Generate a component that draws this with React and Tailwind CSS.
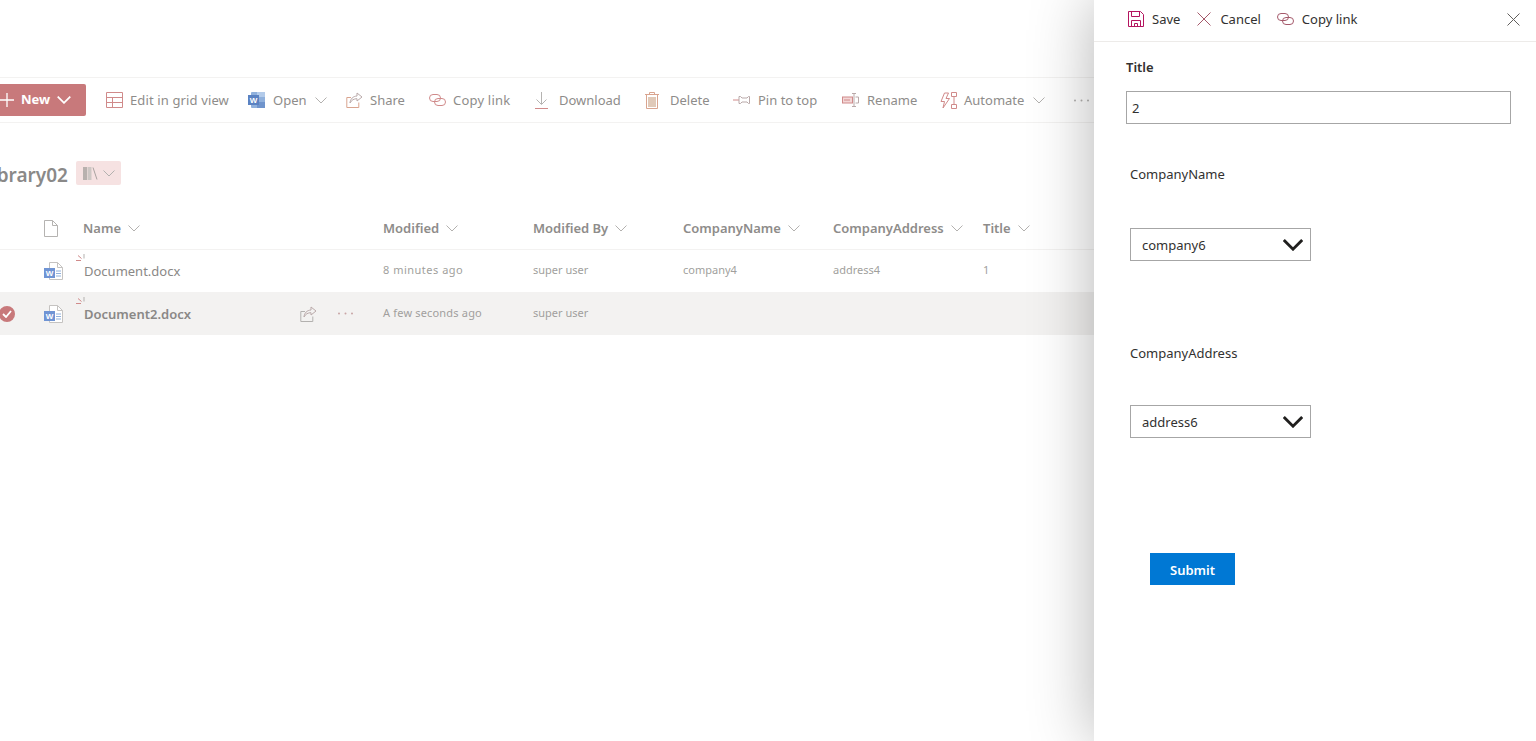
import React from 'react';

// Small line icons drawn to match the command bar
const GridIcon = () => (
  <svg width="17" height="16" viewBox="0 0 17 16" fill="none" stroke="#d08a8a" strokeWidth="1">
    <path d="M.5.5h16v15H.5zM.5 5.500h16M.5 10.500h16M6.500 5.500v10" />
  </svg>
);

const WordIcon = () => (
  <svg width="17" height="16" viewBox="0 0 17 16">
    <rect x="3" y="0" width="14" height="16" rx="1" fill="#8fb0dc" />
    <rect x="9" y="0" width="8" height="5" fill="#b3cbea" />
    <rect x="9" y="10" width="8" height="6" fill="#6f94cc" />
    <rect x="0" y="3" width="11" height="10" fill="#5a82c2" />
    <text x="5.500" y="11" textAnchor="middle" fontSize="8" fontWeight="700" fill="#fff" fontFamily="Liberation Sans, sans-serif">W</text>
  </svg>
);

const ShareIcon = ({ color = '#d9a48f' }) => (
  <svg width="17" height="16" viewBox="0 0 17 16" fill="none" strokeWidth="1">
    <path d="M5 5.500H.8v10h12v-5" stroke={color} />
    <path d="M11 1l5 4-5 4V6.700C8 6.700 5.500 8 4 11c.3-4 3-6.800 7-7z" stroke="#b9a9a9" />
  </svg>
);

const LinkIcon = ({ color = '#d08a8a' }) => (
  <svg width="17" height="12" viewBox="0 0 17 12" fill="none" stroke={color} strokeWidth="1">
    <rect x=".5" y=".5" width="11" height="7" rx="3.500" />
    <rect x="5.500" y="4.500" width="11" height="7" rx="3.500" />
  </svg>
);

const DownloadIcon = () => (
  <svg width="15" height="17" viewBox="0 0 15 17" fill="none" strokeWidth="1">
    <path d="M7.500 0v12M2.500 7.500l5 5 5-5" stroke="#b5b3b1" />
    <path d="M1 16.500h13" stroke="#d08a8a" />
  </svg>
);

const TrashIcon = () => (
  <svg width="14" height="17" viewBox="0 0 14 17" fill="none" strokeWidth="1">
    <rect x="3" y="5" width="8" height="10" fill="#e0c9b8" stroke="none" />
    <path d="M1.500 3v13.500h11V3M0 2.500h14M4.500 2.500V.5h5v2" stroke="#d9a48f" />
  </svg>
);

const PinIcon = () => (
  <svg width="18" height="10" viewBox="0 0 18 10" fill="none" stroke="#b9a9a9" strokeWidth="1">
    <path d="M0 5h6" stroke="#d08a8a" />
    <path d="M6 1.500h1.500L9 3h5l1.500-1.500h1v7h-1L14 7H9L7.500 8.500H6z" />
  </svg>
);

const RenameIcon = () => (
  <svg width="17" height="14" viewBox="0 0 17 14" fill="none" strokeWidth="1">
    <rect x=".5" y="4" width="10" height="6" fill="#f3d7d7" stroke="#d08a8a" />
    <path d="M2 7h6" stroke="#d08a8a" />
    <path d="M10 .5h4M10 13.500h4M12 .5v13M13.500 4h3v6h-3" stroke="#b9a9a9" />
  </svg>
);

const AutomateIcon = () => (
  <svg width="17" height="17" viewBox="0 0 17 17" fill="none" stroke="#d08a8a" strokeWidth="1">
    <path d="M4.500 1h4L6 6.500h3.500L3 16l1.500-6.500H1z" />
    <path d="M11.500.5h5v4h-5zM11.500 12.500h5v4h-5zM14 4.500v8" />
  </svg>
);

const Chevron = ({ className = '', color = '#b3b1af', w = 12, h = 7, sw = 1 }) => (
  <svg className={className} width={w} height={h} viewBox="0 0 12 7" fill="none" stroke={color} strokeWidth={sw}>
    <path d="M.5.5 6 6 11.500.5" />
  </svg>
);

const Dots = ({ color = '#b3b1af' }) => (
  <svg width="17" height="3" viewBox="0 0 17 3" fill={color}>
    <circle cx="2" cy="1.500" r="1" />
    <circle cx="8.500" cy="1.500" r="1" />
    <circle cx="15" cy="1.500" r="1" />
  </svg>
);

const DocIcon = () => (
  <svg width="19" height="18" viewBox="0 0 19 18">
    <path d="M5.500.5h8l5 5v12h-13z" fill="#fff" stroke="#c5c3c1" />
    <path d="M13.500.5v5h5" fill="none" stroke="#c5c3c1" />
    <path d="M12 9h5M12 11.500h5M12 14h5" stroke="#8fb0dc" />
    <rect x="0" y="6" width="11" height="10" fill="#6f94d4" />
    <text x="5.500" y="14" textAnchor="middle" fontSize="8" fontWeight="700" fill="#fff" fontFamily="Liberation Sans, sans-serif">W</text>
  </svg>
);

const NewMark = () => (
  <svg className="absolute left-[-8px] top-[-6px]" width="10" height="10" viewBox="0 0 10 10" fill="none" strokeWidth="1">
    <path d="M0 6.500h5M2 1.500l3.500 3" stroke="#d08a8a" />
    <path d="M8 0v4.500" stroke="#b3b1af" />
  </svg>
);

const commands = [
  { icon: <GridIcon />, label: 'Edit in grid view', box: 'w-[99px] tracking-[0.13px]', slot: 'w-[24px]', next: 'mr-[19px]' },
  { icon: <WordIcon />, label: 'Open', box: 'w-[34px]', slot: 'w-[25px]', next: 'mr-[19px]', chevron: true },
  { icon: <ShareIcon />, label: 'Share', box: 'w-[35px]', slot: 'w-[24px]', next: 'mr-[24px]' },
  { icon: <LinkIcon />, label: 'Copy link', box: 'w-[58px] tracking-[0.2px]', slot: 'w-[24px]', next: 'mr-[23px]' },
  { icon: <DownloadIcon />, label: 'Download', box: 'w-[62px]', slot: 'w-[25px]', next: 'mr-[24px]' },
  { icon: <TrashIcon />, label: 'Delete', box: 'w-[39px]', slot: 'w-[25px]', next: 'mr-[24px]' },
  { icon: <PinIcon />, label: 'Pin to top', box: 'w-[60px]', slot: 'w-[25px]', next: 'mr-[24px]' },
  { icon: <RenameIcon />, label: 'Rename', box: 'w-[49px]', slot: 'w-[25px]', next: 'mr-[24px]' },
  { icon: <AutomateIcon />, label: 'Automate', box: 'w-[61px]', slot: 'w-[24px]', next: 'mr-[28px]', chevron: true },
];

const rows = [
  { name: 'Document.docx', modified: '8 minutes ago', modClass: 'tracking-[0.5px]', by: 'super user', company: 'company4', address: 'address4', title: '1' },
  { name: 'Document2.docx', modified: 'A few seconds ago', modClass: 'tracking-[0.18px]', by: 'super user', company: '', address: '', title: '', selected: true },
];

const HeaderCell = ({ label, className }) => (
  <div className={`flex items-center gap-[7px] pt-[1px] text-[13px] font-semibold text-[#8e8c8a] ${className}`}>
    {label}
    <Chevron />
  </div>
);

const DropField = ({ label, value, gap }) => (
  <div className="flex flex-col pl-[36px]">
    <div className="text-[13px] leading-[18px] text-[#323130]">{label}</div>
    <div className={`flex h-[33px] w-[181px] items-center justify-between border border-[#a6a6a6] pl-[11px] pr-[4px] text-[13px] text-[#323130] ${gap}`}>
      <span className="pt-[2px]">{value}</span>
      <Chevron w={20} h={12} sw={1.700} color="#201f1e" className="mr-[3px]" />
    </div>
  </div>
);

const App = () => {
  return (
    <div className="relative h-[741px] w-full overflow-hidden bg-white font-['Noto_Sans','Open_Sans',sans-serif]">
      {/* Library behind the panel */}
      <div className="flex flex-col pt-[77px]">
        <div className="flex h-[46px] items-center border-y border-[#f3f2f1]">
          <div className="ml-[-14px] mr-[20px] flex h-[32px] w-[100px] items-center rounded-r-[2px] bg-[#c8797b] pl-[14px] text-[13px] font-bold text-white">
            <svg className="mr-[7px]" width="14" height="14" viewBox="0 0 14 14" stroke="#fff" strokeWidth="1.300">
              <path d="M7 0v14M0 7h14" />
            </svg>
            New
            <Chevron className="ml-[7px]" color="#fff" w={14} h={8} sw={1.500} />
          </div>
          {commands.map((cmd) => (
            <div key={cmd.label} className={`flex items-center text-[13px] text-[#8e8c8a] ${cmd.next}`}>
              <div className={`flex items-center ${cmd.slot}`}>{cmd.icon}</div>
              <div className={`whitespace-nowrap pt-[2px] ${cmd.box}`}>{cmd.label}</div>
              {cmd.chevron && <Chevron className="ml-[8px]" />}
            </div>
          ))}
          <Dots />
        </div>

        <div className="mt-[39px] flex h-[26px] items-center">
          <div className="ml-[-24px] w-[92px] whitespace-nowrap text-right text-[19px] font-semibold leading-[26px] text-[#8a8988]">Library02</div>
          <div className="ml-[8px] mt-[-1px] flex h-[24px] w-[45px] items-center gap-[5px] self-start rounded-[2px] bg-[#f6e2e2] pl-[7px]">
            <svg width="15" height="13" viewBox="0 0 15 13">
              <rect x="0" y="0" width="4" height="13" fill="#b8b1ae" />
              <rect x="4.500" y="0" width="4" height="13" fill="#cdc7c4" />
              <path d="M10 .5l4 12" stroke="#a8a2a0" fill="none" />
            </svg>
            <Chevron />
          </div>
        </div>

        <div className="mt-[19px] flex h-[43px] items-center border-b border-[#f3f2f1]">
          <div className="w-[83px] flex-none pl-[44px]">
            <svg width="14" height="17" viewBox="0 0 14 17" fill="none" stroke="#b5b3b1">
              <path d="M.5.5h8l5 5v11H.500zM8.500.5v5h5" />
            </svg>
          </div>
          <HeaderCell label="Name" className="w-[300px] flex-none" />
          <HeaderCell label="Modified" className="w-[150px] flex-none" />
          <HeaderCell label="Modified By" className="w-[150px] flex-none" />
          <HeaderCell label="CompanyName" className="w-[150px] flex-none" />
          <HeaderCell label="CompanyAddress" className="w-[150px] flex-none" />
          <HeaderCell label="Title" className="flex-none" />
        </div>

        {rows.map((row) => (
          <div
            key={row.name}
            className={`flex flex-none items-center text-[11px] text-[#a19f9d] ${row.selected ? 'h-[42px] bg-[#f3f2f1] pb-[1px]' : 'h-[43px] border-b border-[#f3f2f1] pb-[1px]'}`}
          >
            <div className="flex w-[44px] flex-none items-center">
              {row.selected && (
                <div className="ml-[-1px] flex h-[16px] w-[16px] items-center justify-center rounded-full bg-[#c8797b]">
                  <svg width="10" height="8" viewBox="0 0 10 8" fill="none" stroke="#fff" strokeWidth="1.800">
                    <path d="M1 4l3 3 5-6" />
                  </svg>
                </div>
              )}
            </div>
            <div className="flex w-[39px] flex-none items-center"><DocIcon /></div>
            <div className="flex w-[300px] flex-none items-center">
              <div className={`relative ml-[1px] w-[216px] pt-[2px] text-[13px] text-[#8a8886] ${row.selected ? 'font-semibold' : ''}`}>
                <NewMark />
                {row.name}
              </div>
              {row.selected && (
                <div className="flex items-center">
                  <ShareIcon color="#b3b1af" />
                  <div className="ml-[20px]"><Dots color="#c9a5a5" /></div>
                </div>
              )}
            </div>
            <div className={`w-[150px] flex-none ${row.modClass}`}>{row.modified}</div>
            <div className="w-[150px] flex-none">{row.by}</div>
            <div className="w-[150px] flex-none">{row.company}</div>
            <div className="w-[150px] flex-none">{row.address}</div>
            <div className="flex-none">{row.title}</div>
          </div>
        ))}
      </div>

      {/* Edit panel sliding over the library */}
      <div className="absolute inset-y-0 right-0 flex w-[442px] flex-col bg-white shadow-[0_0_60px_rgba(0,0,0,0.3)]">
        <div className="flex h-[42px] flex-none items-center border-b border-[#edebe9] pb-[3px] pl-[34px] pr-[16px] text-[13px] text-[#323130]">
          <svg className="mr-[8px]" width="16" height="16" viewBox="0 0 16 16" fill="none" stroke="#b4145f">
            <path d="M.5.5h12l3 3v12H.5zM3.500.5v5h8v-5M3.500 15.500v-6h9v6M6.500 15.500v-3h3v3" />
          </svg>
          <span className="pt-[1px]">Save</span>
          <svg className="ml-[17px] mr-[9px]" width="14" height="14" viewBox="0 0 14 14" fill="none" stroke="#a4596a">
            <path d="M.5.5l13 13M13.500.5l-13 13" />
          </svg>
          <span className="pt-[1px]">Cancel</span>
          <div className="ml-[16px] mr-[8px] flex items-center"><LinkIcon color="#a4596a" /></div>
          <span className="pt-[1px]">Copy link</span>
          <svg className="ml-auto" width="13" height="13" viewBox="0 0 13 13" fill="none" stroke="#605e5c">
            <path d="M.5.5l12 12M12.500.5l-12 12" />
          </svg>
        </div>

        <div className="ml-[32px] mt-[16px] text-[13px] font-semibold leading-[18px] text-[#323130]">Title</div>
        <div className="ml-[32px] mt-[15px] flex h-[33px] w-[385px] items-center border border-[#a6a6a6] pl-[5px] pt-[2px] text-[13px] text-[#323130]">2</div>

        <div className="mt-[41px]">
          <DropField label="CompanyName" value="company6" gap="mt-[45px]" />
        </div>
        <div className="mt-[83px]">
          <DropField label="CompanyAddress" value="address6" gap="mt-[43px]" />
        </div>

        <button className="ml-[56px] mt-[115px] h-[32px] w-[85px] bg-[#0078d4] pt-[3px] text-[13px] font-semibold text-white">Submit</button>
      </div>
    </div>
  );
};

export default App;
